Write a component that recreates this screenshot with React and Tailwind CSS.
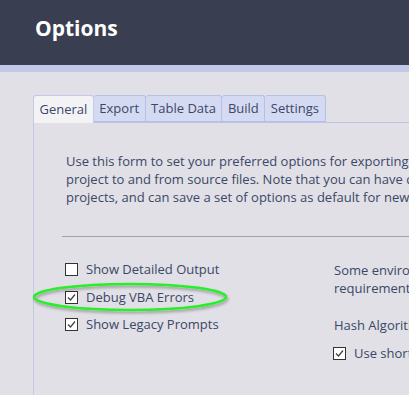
import React from 'react';

const TABS = ['General', 'Export', 'Table Data', 'Build', 'Settings'];

function Check({ checked }) {
  return (
    <span className="flex-shrink-0 w-[13px] h-[13px] border border-[#333] bg-white flex items-center justify-center">
      {checked && (
        <svg width="11" height="11" viewBox="0 0 11 11">
          <path d="M2 5.5 L4.5 8 L9 2.5" fill="none" stroke="#444" strokeWidth="1.3" />
        </svg>
      )}
    </span>
  );
}

function Row({ checked, label }) {
  return (
    <div className="flex items-center gap-[8px] h-[27.5px]">
      <Check checked={checked} />
      <span>{label}</span>
    </div>
  );
}

export default function App() {
  return (
    <div
      className="relative w-[409px] h-[395px] overflow-hidden bg-[#e0e0e6] text-[#3c4766]"
      style={{ fontFamily: '"Open Sans", "Noto Sans", sans-serif' }}
    >
      {/* Header */}
      <div className="h-[65px] bg-[#393e50] flex items-center pl-[35px]">
        <h1 className="text-[21px] font-bold text-white leading-none mt-[-8px]">Options</h1>
      </div>
      <div className="h-[7px] bg-[#c2c8e8]" />

      {/* Tabs */}
      <div className="pl-[33px] pt-[24px] w-[800px]">
        <div className="flex items-end h-[27px] border-b border-[#bcc3e4]">
          {TABS.map((t, i) => (
            <div
              key={t}
              className={
                i === 0
                  ? 'px-[5.5px] flex items-center text-[13px] bg-[#f3f3f6] border border-b-0 border-[#c4c9e4] rounded-t-[3px] mb-[-1px] h-[28px]'
                  : 'h-[27px] px-[5.5px] flex items-center text-[13px] bg-[#d5daf3] border border-l-0 border-[#b6bfe6] rounded-t-[3px]'
              }
            >
              {t}
            </div>
          ))}
        </div>

        {/* Panel */}
        <div className="border-l border-[#c4c9e4] h-[300px] pl-[28px] pt-[29px]">
          <p className="text-[13px] leading-[18px] whitespace-nowrap pl-[4px]">
            Use this form to set your preferred options for exporting and importing your
            <br />
            project to and from source files. Note that you can have different options for
            <br />
            projects, and can save a set of options as default for new projects.
          </p>
          <div className="mt-[30px] border-t border-[#a3a3a6] w-[700px]" />

          <div className="flex mt-[19px] text-[13px]">
            <div className="w-[272px] pl-[3px]">
              <Row label="Show Detailed Output" />
              <Row checked label="Debug VBA Errors" />
              <Row checked label="Show Legacy Prompts" />
            </div>
            <div className="leading-[18px]">
              <div className="pt-[5px]">Some environments may have specific</div>
              <div>requirements for hash algorithm usage.</div>
              <div className="mt-[19px]">Hash Algorithm</div>
              <div className="flex items-center gap-[8px] mt-[10px] ml-[-1px]">
                <Check checked />
                <span>Use short hashes in index</span>
              </div>
            </div>
          </div>
        </div>
      </div>

      {/* Green annotation ellipse */}
      <svg className="absolute left-[30px] top-[280px]" width="205" height="36" viewBox="0 0 205 36">
        <defs>
          <filter id="sh" x="-10%" y="-40%" width="120%" height="180%">
            <feDropShadow dx="1" dy="2" stdDeviation="1.5" floodColor="#000" floodOpacity="0.35" />
          </filter>
        </defs>
        <ellipse cx="100" cy="17" rx="96" ry="13" fill="none" stroke="#2aee2a" strokeWidth="2.5" filter="url(#sh)" />
      </svg>
    </div>
  );
}
